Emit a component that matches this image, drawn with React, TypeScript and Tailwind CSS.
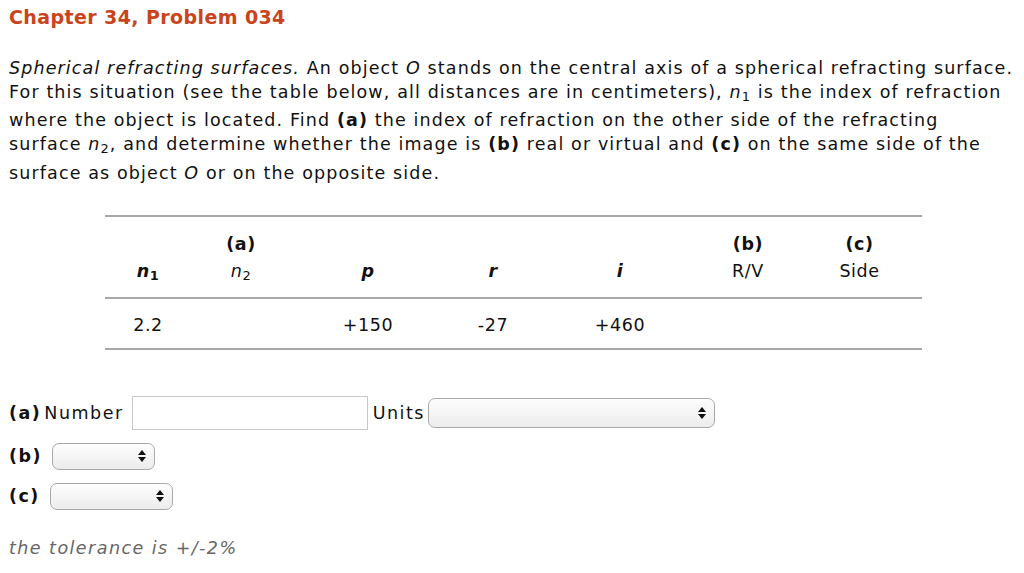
import React from "react";

const FONT = { fontFamily: '"DejaVu Sans", Verdana, sans-serif' };

function SelectArrows() {
  return (
    <svg width="8" height="12" viewBox="0 0 8 12" className="shrink-0">
      <path d="M4 0 L8 5 L0 5 Z" fill="#111" />
      <path d="M0 7 L8 7 L4 12 Z" fill="#111" />
    </svg>
  );
}

function FakeSelect({ className }: { className: string }) {
  return (
    <div
      className={`flex items-center justify-end pr-[8px] rounded-[7px] border border-[#a9a9a9] bg-gradient-to-b from-[#fdfdfd] to-[#ececec] ${className}`}
    >
      <SelectArrows />
    </div>
  );
}

type Col = { top?: string; label: React.ReactNode; value?: string; w: string };

const COLS: Col[] = [
  {
    w: "w-[86px]",
    label: (
      <span className="font-bold italic">
        n<sub className="text-[13px] not-italic">1</sub>
      </span>
    ),
    value: "2.2",
  },
  {
    w: "w-[100px]",
    top: "(a)",
    label: (
      <span className="italic">
        n<sub className="text-[13px] not-italic">2</sub>
      </span>
    ),
  },
  { w: "w-[154px]", label: <span className="font-bold italic">p</span>, value: "+150" },
  { w: "w-[96px]", label: <span className="font-bold italic">r</span>, value: "-27" },
  { w: "w-[158px]", label: <span className="font-bold italic">i</span>, value: "+460" },
  { w: "w-[98px]", top: "(b)", label: "R/V" },
  { w: "w-[125px]", top: "(c)", label: "Side" },
];

export default function App() {
  return (
    <main
      className="min-h-[573px] bg-white text-[#111] px-[9px] pt-[4px] text-[17.5px] tracking-[1.12px]"
      style={FONT}
    >
      {/* Title */}
      <h1 className="text-[19px] font-bold text-[#c9441c] leading-[26px] tracking-[0.4px]">
        Chapter 34, Problem 034
      </h1>

      {/* Problem statement, wrapped as in the original */}
      <div className="mt-[26px] whitespace-nowrap">
        <div className="h-[24px] leading-[24px]">
          <i>Spherical refracting surfaces.</i> An object <i>O</i> stands on the central axis of a
          spherical refracting surface.
        </div>
        <div className="h-[28px] leading-[24px]">
          For this situation (see the table below, all distances are in centimeters), <i>n</i>
          <sub className="text-[13px]">1</sub> is the index of refraction
        </div>
        <div className="h-[24px] leading-[24px]">
          where the object is located. Find <b>(a)</b> the index of refraction on the other side of
          the refracting
        </div>
        <div className="h-[29px] leading-[24px]">
          surface <i>n</i>
          <sub className="text-[13px]">2</sub>, and determine whether the image is <b>(b)</b> real or
          virtual and <b>(c)</b> on the same side of the
        </div>
        <div className="h-[24px] leading-[24px]">
          surface as object <i>O</i> or on the opposite side.
        </div>
      </div>

      {/* Data table */}
      <div className="mt-[30px] ml-[96px] w-[817px] tracking-[0.6px]">
        <div className="h-[2px] bg-[#a8a8a8]" />
        <div className="flex h-[80px] pt-[14px]">
          {COLS.map((c, i) => (
            <div key={i} className={`${c.w} flex flex-col items-center leading-[27px]`}>
              <span className="font-bold h-[27px]">{c.top ?? ""}</span>
              <span>{c.label}</span>
            </div>
          ))}
        </div>
        <div className="h-[2px] bg-[#a8a8a8]" />
        <div className="flex h-[49px] items-center pt-[4px]">
          {COLS.map((c, i) => (
            <div key={i} className={`${c.w} text-center`}>
              {c.value ?? ""}
            </div>
          ))}
        </div>
        <div className="h-[2px] bg-[#a8a8a8]" />
      </div>

      {/* Answers */}
      <div className="mt-[45px] flex flex-col tracking-[1.5px]">
        <div className="flex items-center h-[36px]">
          <span className="font-bold">(a)</span>
          <span className="ml-[3px]">Number</span>
          <div className="ml-[8px] w-[236px] h-[34px] border border-[#c8c8c8] bg-white" />
          <span className="ml-[5px]">Units</span>
          <FakeSelect className="ml-[3px] w-[287px] h-[30px]" />
        </div>
        <div className="flex items-center h-[28px] mt-[11px]">
          <span className="font-bold">(b)</span>
          <FakeSelect className="ml-[10px] w-[103px] h-[27px]" />
        </div>
        <div className="flex items-center h-[28px] mt-[12px]">
          <span className="font-bold">(c)</span>
          <FakeSelect className="ml-[10px] w-[123px] h-[27px]" />
        </div>
        <p className="mt-[25px] italic text-[#666] tracking-[1.45px]">the tolerance is +/-2%</p>
      </div>
    </main>
  );
}
